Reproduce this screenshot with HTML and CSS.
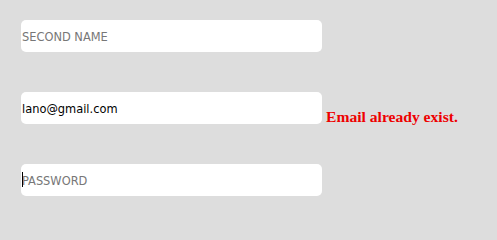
FILE: index.html
```html
<!DOCTYPE html>
<html>
<head>
<meta charset="utf-8">
<link rel="stylesheet" href="styles.css">
</head>
<body>
<form class="form">
  <div class="row">
    <input class="field" type="text" placeholder="SECOND NAME">
  </div>
  <div class="row">
    <input class="field" type="text" value="lano@gmail.com">
    <span class="error">Email already exist.</span>
  </div>
  <div class="row">
    <div class="field-wrap">
      <input class="field" type="password" placeholder="PASSWORD">
      <span class="caret"></span>
    </div>
  </div>
</form>
</body>
</html>
```
FILE: styles.css
```css
html, body {
  margin: 0;
  padding: 0;
  background: #dddddd;
}
body {
  padding: 20px 21px;
}
.form {
  display: flex;
  flex-direction: column;
  gap: 40px;
}
.row {
  display: flex;
  align-items: flex-end;
}
.field-wrap {
  position: relative;
}
.field {
  display: block;
  box-sizing: border-box;
  width: 301px;
  height: 32px;
  margin: 0;
  border: none;
  border-radius: 5px;
  padding: 0 0 0 1px;
  background: #ffffff;
  color: #000000;
  font-family: "DejaVu Sans Condensed", "DejaVu Sans", sans-serif;
  font-stretch: condensed;
  font-size: 12.7px;
  outline: none;
}
.field::placeholder {
  color: #777777;
  opacity: 1;
}
.caret {
  position: absolute;
  left: 1px;
  top: 8px;
  width: 1px;
  height: 15px;
  background: #000000;
}
.error {
  margin-left: 4px;
  font-family: "Liberation Serif", "Times New Roman", serif;
  font-weight: bold;
  font-size: 15.6px;
  line-height: 15px;
  color: #ee0000;
}
```
